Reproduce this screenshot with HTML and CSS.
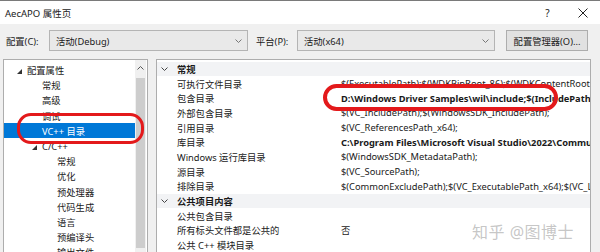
FILE: index.html
```html
<!DOCTYPE html>
<html lang="zh-CN">
  <head>
    <meta charset="UTF-8" />
    <title>AecAPO 属性页</title>
    <link rel="stylesheet" href="styles.css">
  </head>
  <body>
    <div class="dialog">
      <div class="titlebar">
        <span class="title">AecAPO 属性页</span>
        <span class="title-btn help">?</span>
        <span class="title-btn close">
          <svg width="10" height="10" viewBox="0 0 10 10"><path d="M0.5 0.5 L9.5 9.5 M9.5 0.5 L0.5 9.5" stroke="#222" stroke-width="1" fill="none"/></svg>
        </span>
      </div>

      <div class="toolbar">
        <span class="field-label">配置(C):</span>
        <div class="combo combo-config">
          <span>活动(Debug)</span>
          <svg class="chevron" width="7" height="4" viewBox="0 0 7 4"><polyline points="0.5,0.5 3.5,3.5 6.5,0.5" stroke="#777" fill="none"/></svg>
        </div>
        <span class="field-label platform">平台(P):</span>
        <div class="combo combo-platform">
          <span>活动(x64)</span>
          <svg class="chevron" width="7" height="4" viewBox="0 0 7 4"><polyline points="0.5,0.5 3.5,3.5 6.5,0.5" stroke="#777" fill="none"/></svg>
        </div>
        <button class="btn">配置管理器(O)...</button>
      </div>

      <div class="main">
        <div class="tree">
          <ul class="tree-list">
            <li class="node lvl-0"><span class="twisty"></span>配置属性</li>
            <li class="node lvl-1">常规</li>
            <li class="node lvl-1">高级</li>
            <li class="node lvl-1">调试</li>
            <li class="node lvl-1 selected">VC++ 目录</li>
            <li class="node lvl-1"><span class="twisty"></span>C/C++</li>
            <li class="node lvl-2">常规</li>
            <li class="node lvl-2">优化</li>
            <li class="node lvl-2">预处理器</li>
            <li class="node lvl-2">代码生成</li>
            <li class="node lvl-2">语言</li>
            <li class="node lvl-2">预编译头</li>
            <li class="node lvl-2">输出文件</li>
          </ul>
          <div class="scrollbar">
            <svg class="scroll-up" width="7" height="4" viewBox="0 0 7 4"><polyline points="0.5,3.5 3.5,0.5 6.5,3.5" stroke="#555" fill="none"/></svg>
            <div class="thumb"></div>
          </div>
        </div>

        <div class="grid">
          <div class="row category">
            <span class="gutter"><svg width="7" height="4" viewBox="0 0 7 4"><polyline points="0.5,0.5 3.5,3.5 6.5,0.5" stroke="#444" fill="none"/></svg></span>
            <span class="name">常规</span>
            <span class="value"></span>
          </div>
          <div class="row">
            <span class="gutter"></span>
            <span class="name">可执行文件目录</span>
            <span class="value">$(ExecutablePath);$(WDKBinRoot_86);$(WDKContentRoot)bin;</span>
          </div>
          <div class="row">
            <span class="gutter"></span>
            <span class="name">包含目录</span>
            <span class="value bold">D:\Windows Driver Samples\wil\include;$(IncludePath)</span>
          </div>
          <div class="row">
            <span class="gutter"></span>
            <span class="name">外部包含目录</span>
            <span class="value">$(VC_IncludePath);$(WindowsSDK_IncludePath);</span>
          </div>
          <div class="row">
            <span class="gutter"></span>
            <span class="name">引用目录</span>
            <span class="value">$(VC_ReferencesPath_x64);</span>
          </div>
          <div class="row">
            <span class="gutter"></span>
            <span class="name">库目录</span>
            <span class="value bold">C:\Program Files\Microsoft Visual Studio\2022\Community\</span>
          </div>
          <div class="row">
            <span class="gutter"></span>
            <span class="name">Windows 运行库目录</span>
            <span class="value">$(WindowsSDK_MetadataPath);</span>
          </div>
          <div class="row">
            <span class="gutter"></span>
            <span class="name">源目录</span>
            <span class="value">$(VC_SourcePath);</span>
          </div>
          <div class="row">
            <span class="gutter"></span>
            <span class="name">排除目录</span>
            <span class="value">$(CommonExcludePath);$(VC_ExecutablePath_x64);$(VC_LibraryPath_x64);</span>
          </div>
          <div class="row category">
            <span class="gutter"><svg width="7" height="4" viewBox="0 0 7 4"><polyline points="0.5,0.5 3.5,3.5 6.5,0.5" stroke="#444" fill="none"/></svg></span>
            <span class="name">公共项目内容</span>
            <span class="value"></span>
          </div>
          <div class="row">
            <span class="gutter"></span>
            <span class="name">公共包含目录</span>
            <span class="value"></span>
          </div>
          <div class="row">
            <span class="gutter"></span>
            <span class="name">所有标头文件都是公共的</span>
            <span class="value">否</span>
          </div>
          <div class="row">
            <span class="gutter"></span>
            <span class="name">公共 C++ 模块目录</span>
            <span class="value"></span>
          </div>
        </div>
      </div>

      <!-- hand-drawn annotations over the screenshot -->
      <div class="mark mark-tree"></div>
      <div class="mark mark-value"></div>
      <div class="watermark">知乎 @图博士</div>
    </div>
  </body>
</html>
```

FILE: styles.css
```css
:root {
  --dialog-bg: #f0f0f0;
  --border: #a0a0a0;
  --text: #1a1a1a;
  --select: #0078d7;
  --mark: #e3191b;
  --row-h: 14.7px;
  --node-h: 15.2px;
}

* {
  margin: 0;
  padding: 0;
  box-sizing: border-box;
}

body {
  font-family: "Noto Sans", "Noto Sans CJK SC", sans-serif;
  font-size: 9.3px;
  color: var(--text);
  background: var(--dialog-bg);
}

.dialog {
  position: relative;
  width: 600px;
  height: 252px;
  overflow: hidden;
  background: var(--dialog-bg);
  border-top: 1px solid #7a7a7a;
}

/* title bar */
.titlebar {
  display: flex;
  align-items: center;
  height: 23px;
  padding-left: 5px;
  background: white;
}

.title {
  font-size: 9.5px;
  flex: 1;
}

.title-btn {
  display: flex;
  justify-content: center;
  align-items: center;
  width: 35px;
  font-size: 10px;
}

.help {
  margin-right: 0;
}

.close {
  margin-right: 0;
}

/* configuration bar */
.toolbar {
  display: flex;
  align-items: center;
  height: 34px;
  padding-left: 6px;
  padding-bottom: 1px;
}

.field-label {
  width: 43px;
}

.field-label.platform {
  width: 41px;
  margin-left: 8px;
}

.combo {
  display: flex;
  align-items: center;
  justify-content: space-between;
  height: 21px;
  padding: 0 5px 0 6px;
  background: #e9e9e9;
  border: 1px solid #b4b4b4;
}

.combo-config {
  width: 199px;
}

.combo-platform {
  width: 198px;
}

.btn {
  width: 82px;
  height: 21px;
  margin-left: 11px;
  font-family: inherit;
  font-size: 9.3px;
  color: var(--text);
  background: #e1e1e1;
  border: 1px solid #adadad;
}

/* main area */
.main {
  display: flex;
  align-items: flex-start;
  padding-left: 3px;
  margin-top: 1px;
}

.tree {
  display: flex;
  width: 145px;
  height: 200px;
  background: white;
  border: 1px solid #adadad;
}

.tree-list {
  list-style: none;
  flex: 1;
  padding-top: 2.5px;
}

.node {
  display: flex;
  align-items: center;
  height: var(--node-h);
  white-space: nowrap;
}

.lvl-0 {
  padding-left: 13px;
}

.lvl-1 {
  padding-left: 38px;
}

.lvl-1:has(.twisty) {
  padding-left: 28px;
}

.lvl-2 {
  padding-left: 53px;
}

.twisty {
  width: 0;
  height: 0;
  margin-right: 5px;
  margin-top: 2px;
  border-left: 5px solid transparent;
  border-bottom: 5px solid #333;
}

.node.selected {
  background: var(--select);
  color: white;
}

.scrollbar {
  display: flex;
  flex-direction: column;
  align-items: center;
  width: 11px;
  margin-right: 1px;
  background: #f0f0f0;
}

.scroll-up {
  margin: 6px 0 8px;
}

.thumb {
  width: 9px;
  height: 170px;
  background: #cdcdcd;
}

.grid {
  width: 435px;
  height: 200px;
  margin-left: 8px;
  padding-top: 1.5px;
  background: white;
  border: 1px solid #adadad;
}

.row {
  display: flex;
  align-items: center;
  height: var(--row-h);
  white-space: nowrap;
}

.row.category {
  background: #f2f3f5;
  font-weight: bold;
}

.gutter {
  display: flex;
  align-items: center;
  justify-content: center;
  width: 15px;
  height: 100%;
}

.name {
  width: 164px;
  padding-left: 5px;
  overflow: hidden;
}

.value {
  flex: 1;
  padding-left: 5px;
  overflow: hidden;
}

.value.bold {
  font-weight: bold;
}

/* annotations */
.mark {
  position: absolute;
  border: 3px solid var(--mark);
  border-radius: 14px;
}

.mark-tree {
  left: 17px;
  top: 112px;
  width: 127px;
  height: 31px;
}

.mark-value {
  left: 323px;
  top: 83px;
  width: 235px;
  height: 27px;
  border-width: 4px;
}

.watermark {
  position: absolute;
  left: 472px;
  top: 218px;
  font-size: 16px;
  color: rgba(150, 150, 150, 0.55);
  letter-spacing: 0.5px;
}
```
